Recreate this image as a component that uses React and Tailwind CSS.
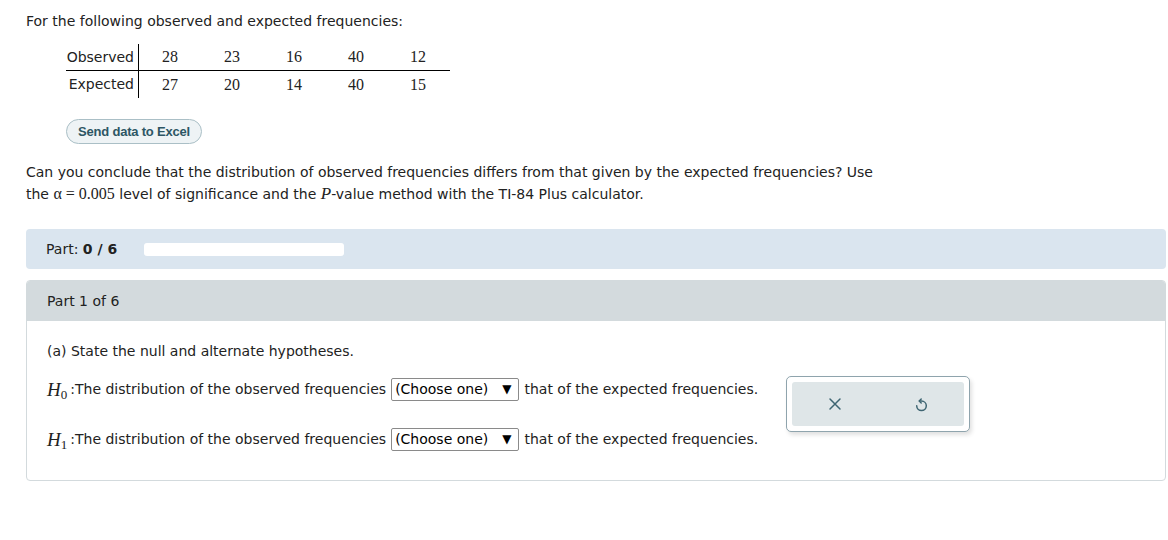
import React from "react";

const observed = [28, 23, 16, 40, 12];
const expected = [27, 20, 14, 40, 15];

function ChooseOne() {
  return (
    <span className="inline-flex items-center h-[23px] pl-[3px] pr-[7px] border border-[#8a8a8a] rounded-[2px] bg-white text-[14px] text-black mx-[5px] align-middle">
      (Choose one)
      <span className="ml-[14px] text-[12px]">▼</span>
    </span>
  );
}

function Hyp({ sub }) {
  return (
    <div className="flex items-center h-[24px]">
      <span className="font-['Liberation_Serif',serif] italic text-[19px] leading-none">H</span>
      <span className="font-['Liberation_Serif',serif] text-[13px] leading-none mt-[10px] mr-[3px]">{sub}</span>
      <span>:The distribution of the observed frequencies</span>
      <ChooseOne />
      <span>that of the expected frequencies.</span>
    </div>
  );
}

export default function App() {
  return (
    <div className="min-h-[540px] bg-white pl-[26px] pr-[2px] pt-[11px] font-['DejaVu_Sans',Verdana,sans-serif] text-[14px] text-[#222]">
      <p className="leading-[20px]">For the following observed and expected frequencies:</p>

      {/* data table */}
      <div className="ml-[40px] mt-[13px] w-[384px]">
        <div className="flex h-[27px] border-b border-black">
          <div className="w-[73px] pr-[4px] border-r border-black flex items-center justify-end pt-[1px]">Observed</div>
          {observed.map((v, i) => (
            <div key={i} className="w-[62px] flex items-center justify-center font-['Liberation_Serif',serif] text-[16px]">{v}</div>
          ))}
        </div>
        <div className="flex h-[27px]">
          <div className="w-[73px] pr-[4px] border-r border-black flex items-center justify-end">Expected</div>
          {expected.map((v, i) => (
            <div key={i} className="w-[62px] flex items-center justify-center font-['Liberation_Serif',serif] text-[16px]">{v}</div>
          ))}
        </div>
      </div>

      <button className="ml-[40px] mt-[21px] h-[25px] px-[11px] rounded-full border border-[#aabfc6] bg-[#eef3f5] text-[#2d5664] font-['Liberation_Sans',Arial,sans-serif] font-bold text-[13px] tracking-[-0.2px]">
        Send data to Excel
      </button>

      <p className="mt-[18px] leading-[21px]">
        Can you conclude that the distribution of observed frequencies differs from that given by the expected frequencies? Use
        <br />
        the{" "}
        <span className="font-['Liberation_Serif',serif] text-[16px]">α = 0.005</span>{" "}
        level of significance and the{" "}
        <span className="font-['Liberation_Serif',serif] italic text-[17px]">P</span>-value method with the TI-84 Plus calculator.
      </p>

      {/* progress */}
      <div className="mt-[24px] h-[40px] rounded-[4px] bg-[#dae5ef] flex items-center pl-[20px]">
        <span>Part: <span className="font-bold">0 / 6</span></span>
        <div className="ml-[27px] w-[200px] h-[13px] rounded-[3px] bg-white" />
      </div>

      {/* part card */}
      <div className="mt-[11px] rounded-[4px] border border-[#d3dadd] overflow-hidden">
        <div className="h-[40px] bg-[#d3dadd] flex items-center pl-[20px]">Part 1 of 6</div>
        <div className="px-[20px] pt-[20px] pb-[29px] flex">
          <div className="flex flex-col">
            <p className="leading-[20px]">(a) State the null and alternate hypotheses.</p>
            <div className="mt-[16px]"><Hyp sub="0" /></div>
            <div className="mt-[26px]"><Hyp sub="1" /></div>
          </div>
          <div className="ml-[28px] mt-[35px] h-[56px] w-[184px] rounded-[5px] border border-[#8fa4ad] bg-white p-[5px] shadow-[2px_3px_4px_rgba(0,0,0,0.12)]">
            <div className="h-full rounded-[3px] bg-[#dfe6e8] flex items-center justify-around text-[#3e6572]">
              <svg width="14" height="14" viewBox="0 0 14 14" fill="none" stroke="currentColor" strokeWidth="1.5" strokeLinecap="round">
                <path d="M2 2 L12 12 M12 2 L2 12" />
              </svg>
              <svg width="14" height="16" viewBox="0 0 14 16" fill="none" stroke="currentColor" strokeWidth="1.5" strokeLinecap="round" strokeLinejoin="round">
                <path d="M5.5 5 L7.5 5 A4.8 4.8 0 1 1 2.7 9.8" />
                <path d="M7.2 3 L5.2 5 L7.2 7" />
              </svg>
            </div>
          </div>
        </div>
      </div>
    </div>
  );
}
